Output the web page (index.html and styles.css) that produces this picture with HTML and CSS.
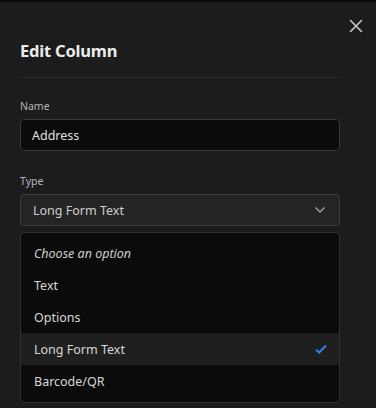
FILE: index.html
```html
<!DOCTYPE html>
<html lang="en">
<head>
  <meta charset="UTF-8">
  <meta name="viewport" content="width=device-width, initial-scale=1.0">
  <title>Edit Column</title>
  <link rel="stylesheet" href="styles.css">
</head>
<body>
  <div class="panel">
    <button class="close-btn" aria-label="Close">
      <svg width="14" height="14" viewBox="0 0 14 14"><path d="M1.5 1.5 L12.5 12.5 M12.5 1.5 L1.5 12.5" stroke="#c8c8c8" stroke-width="1.6" fill="none" stroke-linecap="round"/></svg>
    </button>
    <h1 class="panel-title">Edit Column</h1>
    <div class="divider"></div>

    <div class="field">
      <label class="field-label">Name</label>
      <div class="text-input">Address</div>
    </div>

    <div class="field">
      <label class="field-label">Type</label>
      <div class="select">
        <span>Long Form Text</span>
        <svg width="12" height="8" viewBox="0 0 12 8"><path d="M1.5 1.5 L6 6 L10.5 1.5" stroke="#9a9a9a" stroke-width="1.5" fill="none"/></svg>
      </div>
      <ul class="option-list">
        <li class="placeholder">Choose an option</li>
        <li>Text</li>
        <li>Options</li>
        <li class="selected">Long Form Text
          <svg width="12" height="10" viewBox="0 0 12 10"><path d="M1 5.5 L4.2 8.5 L11 1.5" stroke="#2f7ff0" stroke-width="2" fill="none"/></svg>
        </li>
        <li>Barcode/QR</li>
      </ul>
    </div>
  </div>
</body>
</html>
```

FILE: styles.css
```css
* { box-sizing: border-box; margin: 0; padding: 0; }
html, body { height: 100%; overflow: hidden; }
body {
  font-family: 'Noto Sans', 'Open Sans', sans-serif;
  background: #1c1c1c;
  color: #d6d6d6;
  border-top: 2px solid #0a0a0a;
}
.panel {
  position: relative;
  padding: 37px 36px 0 20px;
}
.close-btn {
  position: absolute;
  top: 17px;
  right: 13px;
  background: none;
  border: none;
  width: 14px;
  height: 14px;
  cursor: pointer;
}
.close-btn svg { display: block; }
.panel-title {
  font-size: 16.5px;
  font-weight: 700;
  color: #ececec;
  line-height: 24px;
  letter-spacing: -0.2px;
}
.divider {
  height: 1px;
  background: #2c2c2c;
  margin: 14px 0 20px;
}
.field { margin-bottom: 22px; }
.field-label {
  display: block;
  font-size: 10.5px;
  color: #b4b4b4;
  line-height: 16px;
  margin-bottom: 5px;
}
.text-input {
  height: 32px;
  background: #0b0b0b;
  border: 1px solid #3a3a3a;
  border-radius: 4px;
  padding: 0 11px;
  display: flex;
  align-items: center;
  font-size: 12.5px;
  color: #e0e0e0;
}
.select {
  height: 32px;
  background: #242424;
  border: 1px solid #3c3c3c;
  border-radius: 4px;
  padding: 0 13px 0 12px;
  display: flex;
  align-items: center;
  justify-content: space-between;
  font-size: 12.5px;
  color: #cfcfcf;
}
.option-list {
  list-style: none;
  margin-top: 6px;
  background: #0b0b0b;
  border: 1px solid #333;
  border-radius: 4px;
  padding: 4px 0 5px;
}
.option-list li {
  height: 32px;
  padding: 0 12px 0 13px;
  display: flex;
  align-items: center;
  justify-content: space-between;
  font-size: 12.5px;
  color: #d8d8d8;
}
.option-list li.placeholder { font-style: italic; color: #cfcfcf; }
.option-list li.selected { background: #1f1f1f; }
```
